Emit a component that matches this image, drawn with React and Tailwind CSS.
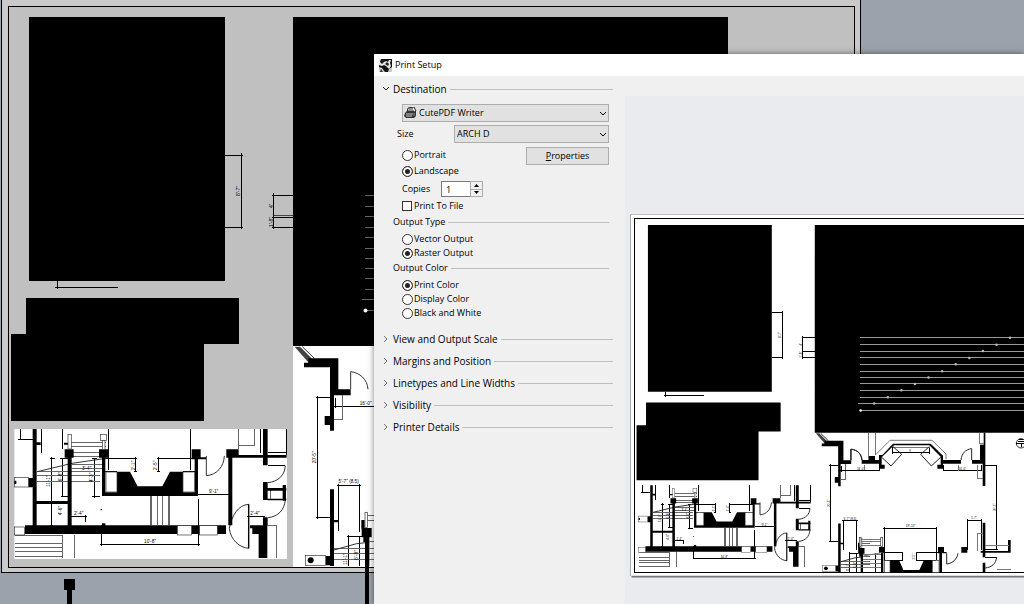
import React, { useState } from 'react';

const SECTIONS = ['View and Output Scale', 'Margins and Position', 'Linetypes and Line Widths', 'Visibility', 'Printer Details'];

const DETAIL_LINES = [195, 206, 216, 227, 237, 248, 258, 268, 278, 289, 299, 310];

const Line = ({ d, stroke = '#000', crisp = true }) => (
  <path d={d} fill="none" stroke={stroke} vectorEffect="non-scaling-stroke" shapeRendering={crisp ? 'crispEdges' : 'auto'} />
);

const Dim = ({ x, y, size = 14, up, children }) => (
  <text
    x={x}
    y={y}
    fontSize={size}
    textAnchor="middle"
    fontFamily="Liberation Sans, sans-serif"
    transform={up ? `rotate(-90 ${x} ${y})` : undefined}
  >
    {children}
  </text>
);

// Fireplace, stair and closets at the lower left of the sheet
const StairPlan = () => (
  <g transform="translate(0 420) scale(0.3333)">
    <rect x="43" y="27" width="818" height="390" fill="#fff" />
    <Line
      d="M61 27V59H98 M55 59H61 M124 27V99 M188 27V88 M325 27V150 M571 27V150
      M782 27V100 M803 97H860 M860 27V106
      M154 112V316 M150 116H165 M180 116H205 M188 116V228 M183 229H208 M150 316H160
      M283 116V234 M277 116H290 M277 230H300
      M316 116H410 M407 112V156 M403 154H410 M475 112V156 M470 116H586 M470 154H480 M316 154H352 M548 154H586
      M594 223H690 M595 237V378 M304 316V378 M300 373H600
      M214 289H260 M256 285V306 M740 289H795 M804 137H856"
    />
    <Line
      d="M716 27V88 M716 77H764V27 M112 155H300 M112 168H300 M112 184H300 M216 134H305 M216 147H305
      M45 348H188 M45 370H188 M45 384H188 M45 394H188 M45 410H188 M188 345V414 M223 345V414
      M208 68H318 M208 80H318 M220 97H300 M220 109H300 M804 316H830V414
      M452 228V314 M456 228V314 M472 228V314 M488 228V314 M506 228V314 M510 228V314 M43 342H75 M812 210V236"
      stroke="#666"
    />
    <Line
      crisp={false}
      stroke="#333"
      d="M112 155L216 130L312 116 M619 108V167C650 165 672 140 673 108 M856 137C855 165 835 185 804 188 M856 240C853 270 835 290 804 293
      M746 253C715 255 696 285 688 325C692 360 718 383 747 385V253"
    />
    {/* walls */}
    <path
      d="M98 27H110V316H98Z M85 174H98V202H85Z M110 243H203V252H110Z M110 67H122V75H110Z
      M203 110H215V316H203Z M194 88H221V113H194Z M297 88H324V113H297Z M192 68H206V74H192Z
      M306 112H316V228H306Z M306 217H594V228H306Z M584 110H594V228H584Z
      M351 155H390L413 199H487L510 155H549V220H351Z
      M575 88H602V112H618V118H575Z M679 88H716V113H679Z M685 110H697V316H685Z M697 105H860V113H697Z
      M789 27H803V136H789Z M789 186H803V240H789Z M803 204H859V212H803Z M848 195H858V242H848Z M803 236H859V241H803Z
      M75 316H678V342H75Z M750 316H802V414H776V342H757V325H750Z M789 292H803V318H789Z M306 310H316V320H306Z M744 253H747V385H744Z"
    />
    <g fill="#fff" stroke="#333" strokeWidth="2">
      <rect x="318" y="156" width="33" height="60" />
      <rect x="549" y="156" width="35" height="60" />
      <rect x="532" y="317" width="43" height="28" />
      <rect x="599" y="317" width="53" height="28" />
      <rect x="43" y="321" width="31" height="24" />
      <rect x="43" y="173" width="42" height="28" />
      <rect x="204" y="43" width="10" height="44" />
      <rect x="301" y="43" width="18" height="18" />
      <rect x="307" y="61" width="8" height="27" />
    </g>
    <path d="M43 182h6v10h-6z M302 267h4v4h-4z" />
    <Dim x={641} y={219}>9&apos;-1&quot;</Dim>
    <Dim x={450} y={370}>10&apos;-8&quot;</Dim>
    <Dim x={236} y={286}>2&apos;-4&quot;</Dim>
    <Dim x={765} y={286}>2&apos;-4&quot;</Dim>
    <Dim x={260} y={149}>3&apos;-4&quot;</Dim>
    <Dim x={405} y={136} up>2&apos;-1&quot;</Dim>
    <Dim x={472} y={136} up>2&apos;-5&quot;</Dim>
    <Dim x={151} y={184} up>11&apos;-1&quot;</Dim>
    <Dim x={185} y={170} up>6&apos;-8&quot;</Dim>
    <Dim x={185} y={272} up>4&apos;-6&quot;</Dim>
    <Dim x={280} y={172} up>4&apos;-3&quot;</Dim>
  </g>
);

// West wall of the large room
const RoomWestPlan = () => (
  <g transform="translate(280 330) scale(0.3333)">
    <path d="M44 50H60L95 85L86 98Z" fill="#444" />
    <Line crisp={false} stroke="#333" d="M67 50L104 86 M212 178V125C240 128 262 148 264 178" />
    <path
      d="M72 98H85V85H175V178H212V196H162V302H150V112H72Z M134 258H150V285H134Z M150 478H162V708H150Z M162 570H174V577H162Z
      M137 678H162V706H137Z M245 594H275V622H245Z M257 600H268V708H257Z M244 570H254V596H244Z M250 620H257V636H250Z"
    />
    <Line
      d="M107 202H155 M113 198V567 M107 562H155 M166 205V234 M162 229H300
      M175 461V602 M170 466H242 M238 461V605 M205 615V708 M201 619H245 M238 619V708"
    />
    <Line
      stroke="#666"
      d="M187 196V268H162 M162 657H300 M162 672H300 M162 688H300 M254 556H300 M254 571H300 M268 636H300"
    />
    <Line crisp={false} stroke="#333" d="M162 660L230 641L258 638" />
    <rect x="76" y="677" width="61" height="29" fill="#fff" stroke="#333" strokeWidth="2" />
    <circle cx="92" cy="691" r="9" />
    <rect x="255" y="547" width="8" height="45" fill="#fff" stroke="#333" strokeWidth="2" />
    <Dim x={257} y={224}>16&apos;-0&quot;</Dim>
    <Dim x={206} y={460}>5&apos;-7&quot; (8.5)</Dim>
    <Dim x={109} y={382} up>20&apos;-5&quot;</Dim>
    <Dim x={202} y={688} up>11&apos;-1&quot;</Dim>
    <Dim x={235} y={675} up>6&apos;-8&quot;</Dim>
  </g>
);

// Bay window, fireplace and east wall of the large room
const RoomEastPlan = () => (
  <g transform="translate(291.8 325.6) scale(0.5274)">
    <path
      d="M143 120H195V105H205L237 71H350L387 107V120H441V131H387V146H370V134H380V110L346 76H240L203 112V134H212V146H195V131H143Z
      M165 108H183V122H165Z M474 120H498V74H509V38H514V198H506V131H474Z M506 308H514V412H506Z M506 428H514V458H506Z
      M514 393H582V360H590V398H500V393Z M442 381H460V398H442Z M372 381H390V396H398V400H384V458H376V400H372Z
      M195 381H213V398H208V458H201V398H195Z M228 422H256L268 450H316L329 422H355V458H228Z"
    />
    <Line
      d="M236 80V102 M236 99H347 M347 80V102 M388 134V152H503V134 M78 152H196 M196 134V154 M514 138H550 M548 136V390 M514 389H552
      M211 322V420 M208 325H370 M367 322V420 M461 298V390 M458 301H505 M502 298V390
      M211 398H266V422H211 M307 398V422H367 M307 398H376 M514 412H548 M185 398V458 M384 457H506 M514 457H640"
    />
    <Line
      stroke="#777"
      d="M162 40V119 M185 40V104 M496 40V72H509 M236 84H347 M432 134V152 M152 134V150 M490 134V176H506 M490 392V342H508
      M514 376H585 M548 450H590 M140 358H205 M140 366H205 M140 378H205 M148 404H201 M148 418H201 M148 430H201 M148 442H201"
    />
    <Line crisp={false} stroke="#777" d="M185 104L228 61H354L396 102V118 M148 408L205 398" />
    <Line
      crisp={false}
      stroke="#222"
      d="M110 120V88C132 90 142 102 143 120 M473 120V86C455 88 443 100 441 120
      M203 112L231 138L263 103L237 80 M380 112L352 138L320 103L346 80 M398 400V432C418 430 430 415 432 400 M548 412C546 430 534 442 514 444"
    />
    <g fill="#fff" stroke="#333" strokeWidth="2">
      <rect x="136" y="352" width="5" height="28" />
      <rect x="200" y="352" width="6" height="28" />
      <rect x="211" y="422" width="17" height="35" />
      <rect x="355" y="422" width="20" height="35" />
      <circle cx="621" cy="70" r="14" strokeWidth="3" />
    </g>
    <Line d="M607 70H636 M621 70V80 M612 64H630 M614 60H628" />
    <Dim x={445} y={151} size={9}>16&apos;-0&quot;</Dim>
    <Dim x={290} y={321} size={10}>19&apos;-11&quot;</Dim>
    <Dim x={289} y={97} size={8}>9&apos;</Dim>
    <Dim x={480} y={298} size={8}>5&apos;-7&quot;</Dim>
    <Dim x={545} y={262} size={9} up>20&apos;-5&quot;</Dim>
    <Dim x={304} y={410} size={9} up>2&apos;-5&quot;</Dim>
  </g>
);

const Sheet = ({ paper, margin, preview }) => (
  <g>
    <rect x="1" y="-8" width="860" height="581" fill={margin} />
    {preview ? (
      <>
        <Line d="M1 573V1H861" stroke="#aaa" />
        <path d="M3 572H861V575H3Z" fill="#777" />
      </>
    ) : (
      <Line d="M1.5 0V572.5H860.5V0" />
    )}
    <rect x="8" y="6" width="846" height="561" fill={paper} />
    <rect x="293" y="346" width="561" height="221" fill="#fff" />
    <Line d="M8.5 6.5H854.5V567.5H8.5Z" />

    {/* masked details */}
    <path d="M29 17H225V281H29Z M26 298H239V344H204V421H11V334H26Z M293 17H728V346H293Z" />
    <Line
      d="M225 155.5H243 M241.5 153V229 M225 227.5H243 M57.5 281V289 M55 287.5H118
      M272 195.5H293 M273.5 193V229 M272 217.5H293 M272 227.5H293"
    />
    {!preview && <Line d="M274 215.5H293" stroke="#444" />}
    <Dim x={240} y={191} size={5} up>8&apos;-7&quot;</Dim>
    <Dim x={273} y={206} size={5} up>4&apos;</Dim>
    <Dim x={273} y={222} size={5} up>1&apos;-8&quot;</Dim>
    {DETAIL_LINES.map((y, i) => (
      <g key={y}>
        <Line d={`M${i === 10 ? 362 : 365} ${y + 0.5}H728`} stroke={preview ? '#999' : '#666'} />
        <circle cx={602 - i * 21.5} cy={y + 0.5} r="2" fill={i === 11 ? '#fff' : '#bbb'} />
      </g>
    ))}

    <StairPlan />
    <RoomWestPlan />
    {preview && <RoomEastPlan />}
  </g>
);

const Chevron = ({ className, d }) => (
  <svg viewBox="0 0 8 8" className={className} fill="none" stroke="currentColor" strokeWidth="1" aria-hidden="true">
    <path d={d} />
  </svg>
);

const RhinoIcon = () => (
  <svg viewBox="0 0 13 13" className="size-[13px]" aria-hidden="true">
    <rect width="13" height="13" fill="#111" />
    <path d="M0 0H2L1 3L3 5L5 3L7 2L9 3L10 1H12L11 4L12 7L10 10L7 7L5 6L3 7L0 6Z" fill="#e8e8e8" />
    <path d="M2 1L4 0L5 2L3 4Z M8 3L10 5L9 7L6 5Z" fill="#222" />
    <path d="M0 8L3 9L6 13H0Z M10 10L13 8V13H9Z" fill="#ccc" />
    <path d="M2 10L4 13H1Z" fill="#333" />
  </svg>
);

const PrinterIcon = () => (
  <svg viewBox="0 0 13 12" className="pointer-events-none absolute left-0.5 top-[3px] h-3 w-[13px]" aria-hidden="true">
    <path d="M4 1L10 0L12 4L10 6H3Z" fill="#eee" stroke="#222" />
    <path d="M5 2H9 M4 4H10" stroke="#333" />
    <path d="M1 6L3 4H10L12 5V9L10 11H2L0 9Z" fill="#333" />
    <path d="M2 7H9 M2 9H8" stroke="#ccc" />
    <path d="M10 6V9" stroke="#888" />
  </svg>
);

const Select = ({ label, id, value, className, icon }) => (
  <div className={`relative h-[18px] ${className}`}>
    <select
      id={id}
      aria-label={label}
      defaultValue={value}
      className={`block h-full w-full appearance-none border border-[#adadad] bg-[#e1e1e1] pr-4 text-[9px] leading-4 ${icon ? 'pl-4' : 'pl-0.5'}`}
    >
      <option>{value}</option>
    </select>
    {icon}
    <Chevron className="pointer-events-none absolute right-0.5 top-[6px] size-2" d="M1 2L4 5L7 2" />
  </div>
);

const Radio = ({ name, label, checked, className = 'h-[14px]' }) => (
  <label className={`flex items-center gap-px ${className}`}>
    <input
      type="radio"
      name={name}
      defaultChecked={checked}
      className="size-[11px] appearance-none rounded-full border border-[#333] bg-white checked:bg-[#222] checked:shadow-[inset_0_0_0_2px_#fff]"
    />
    {label}
  </label>
);

const SectionHeader = ({ title, open, onClick }) => (
  <button type="button" aria-expanded={open} onClick={onClick} className="flex h-[22px] w-full items-center pl-2 text-[10px] leading-4">
    <Chevron
      className={`mr-[3px] size-2 ${open ? 'text-[#222]' : 'text-[#777]'}`}
      d={open ? 'M1 2L4 5L7 2' : 'M2 1L5 4L2 7'}
    />
    {title}
    <span className="ml-[3px] h-px flex-1 bg-[#c0c0c0]" />
  </button>
);

const GroupTitle = ({ children }) => (
  <div className="ml-[19px] mr-1 flex h-4 items-center">
    {children}
    <span className="ml-[3px] h-px flex-1 bg-[#c0c0c0]" />
  </div>
);

const App = () => {
  const [open, setOpen] = useState(true);
  const [copies, setCopies] = useState(1);

  return (
    <div className="relative h-screen overflow-hidden bg-[#9ca2ab] font-['Open_Sans','Noto_Sans',sans-serif] text-[9px] leading-3 text-black">
      {/* Layout sheet */}
      <svg className="absolute inset-0 h-full w-full" aria-hidden="true">
        <Sheet paper="#c0c0c0" margin="#c9c9c9" />
        <path d="M64 579H75V590H72V604H67V590H64Z M365 538H369V604H365Z" />
      </svg>

      {/* Print dialog */}
      <main className="absolute bottom-0 left-[374px] right-0 top-[54px] flex flex-col bg-[#f0f0f0] shadow-[0_0_6px_rgba(0,0,0,0.5)]">
        <header className="flex h-[22px] items-center gap-[3px] bg-white pl-[5px]">
          <RhinoIcon />
          <h1>Print Setup</h1>
        </header>

        <div className="flex min-h-0 flex-1">
          <form className="w-[251px] shrink-0 pr-3 pt-0.5">
            <SectionHeader title="Destination" open={open} onClick={() => setOpen(!open)} />
            {open && (
              <div className="pt-1">
                <Select label="Printer" value="CutePDF Writer" className="ml-7 mr-1" icon={<PrinterIcon />} />
                <div className="ml-[23px] mr-1 mt-[3px] flex items-center">
                  <label htmlFor="size" className="w-[57px]">Size</label>
                  <Select id="size" value="ARCH D" className="flex-1" />
                </div>

                <div className="ml-7 mr-1 mt-1 flex items-start justify-between">
                  <div>
                    <Radio name="orientation" label="Portrait" className="h-4" />
                    <Radio name="orientation" label="Landscape" checked className="h-4" />
                  </div>
                  <button type="button" className="h-[18px] w-[83px] border border-[#adadad] bg-[#e1e1e1]">
                    <span className="underline">P</span>roperties
                  </button>
                </div>

                <div className="ml-7 mt-0.5 flex h-4 items-center">
                  <label htmlFor="copies" className="w-[39px]">Copies</label>
                  <input
                    id="copies"
                    value={copies}
                    onChange={(e) => setCopies(Number(e.target.value) || 1)}
                    className="h-4 w-[29px] border border-[#7a7a7a] border-r-0 bg-white pl-1"
                  />
                  <div className="flex h-4 w-[13px] flex-col border border-[#adadad] bg-[#f0f0f0]">
                    <button type="button" aria-label="More copies" onClick={() => setCopies(copies + 1)} className="flex flex-1 items-center justify-center border-b border-[#adadad]">
                      <svg viewBox="0 0 5 3" className="h-[3px] w-[5px]"><path d="M0 3L2.5 0L5 3Z" /></svg>
                    </button>
                    <button type="button" aria-label="Fewer copies" onClick={() => setCopies(Math.max(1, copies - 1))} className="flex flex-1 items-center justify-center">
                      <svg viewBox="0 0 5 3" className="h-[3px] w-[5px]"><path d="M0 0H5L2.5 3Z" /></svg>
                    </button>
                  </div>
                </div>

                <label className="ml-7 mt-px flex h-4 items-center gap-0.5">
                  <input type="checkbox" className="size-[10px] appearance-none border border-[#333] bg-white checked:bg-[#333]" />
                  Print To File
                </label>

                <GroupTitle>Output Type</GroupTitle>
                <div className="ml-7 pt-0.5">
                  <Radio name="type" label="Vector Output" />
                  <Radio name="type" label="Raster Output" checked />
                </div>
                <GroupTitle>Output Color</GroupTitle>
                <div className="ml-7 pb-2 pt-0.5">
                  <Radio name="color" label="Print Color" checked />
                  <Radio name="color" label="Display Color" />
                  <Radio name="color" label="Black and White" />
                </div>
              </div>
            )}
            {SECTIONS.map((title) => (
              <SectionHeader key={title} title={title} open={false} />
            ))}
          </form>

          {/* Print preview */}
          <div className="mt-5 min-w-0 flex-1 bg-[#eaebef]">
            <svg className="block h-full w-full" role="img" aria-label="Print preview">
              <g transform="translate(4.6 118.2) scale(0.632)">
                <svg x="0" y="0" width="861" height="576">
                  <Sheet paper="#fff" margin="#fff" preview />
                </svg>
              </g>
            </svg>
          </div>
        </div>
      </main>
    </div>
  );
};

export default App;
